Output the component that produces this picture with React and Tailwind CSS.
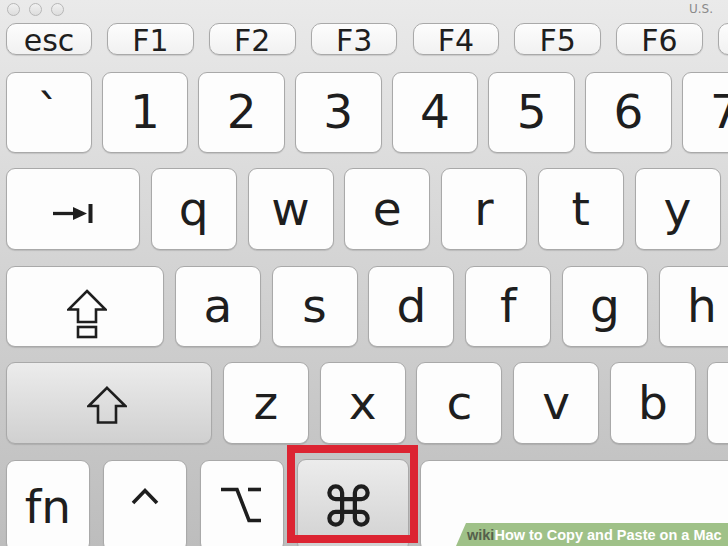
import React from "react";
import { Command } from "lucide-react";

const Key = ({ className = "", gray = false, children }) => (
  <div
    className={`flex shrink-0 justify-center rounded-[9px] border border-[#a9a9a9] text-[#1e1e1e] shadow-[0_1px_1px_rgba(0,0,0,0.12)] ${
      gray ? "bg-linear-to-b from-[#ececec] to-[#d0d0d0]" : "bg-[#fdfdfd]"
    } ${className}`}
  >
    {children}
  </div>
);

const FKey = ({ label, className = "w-[86.6px]" }) => (
  <Key className={`${className} items-center pt-[4px] rounded-[10px] border-[1.5px] border-[#a3a3a3] bg-linear-to-b from-[#fdfdfd] to-[#f1f1f1]`}>
    {label}
  </Key>
);

const Dot = () => (
  <div className="size-[12.5px] rounded-full border border-[#b7b7b7] bg-linear-to-b from-[#f1f1f1] to-[#dddddd]" />
);

const TabIcon = () => (
  <svg width="41" height="19" viewBox="0 0 41 19" className="mt-[8px]">
    <line x1="0" y1="9.5" x2="24" y2="9.5" stroke="#1e1e1e" strokeWidth="3.3" />
    <path d="M20 3 L34 9.5 L20 16 Z" fill="#1e1e1e" />
    <rect x="35.5" y="0" width="4" height="19" fill="#1e1e1e" />
  </svg>
);

const CapsIcon = () => (
  <svg width="40" height="50" viewBox="0 0 40 50" className="mt-[15px] ml-[4px]">
    <path d="M20 2 L38.5 20.5 H29 V33 H11 V20.5 H1.5 Z" fill="none" stroke="#1e1e1e" strokeWidth="2.6" />
    <rect x="11" y="38" width="18" height="10" fill="none" stroke="#1e1e1e" strokeWidth="2.6" />
  </svg>
);

const ShiftIcon = () => (
  <svg width="40" height="38" viewBox="0 0 40 38" className="mt-[4px] mr-[5px]">
    <path d="M20 1.8 L38.3 20 H29 V36.5 H11 V20 H1.7 Z" fill="none" stroke="#1e1e1e" strokeWidth="2.6" />
  </svg>
);

const CtrlIcon = () => (
  <svg width="28" height="18" viewBox="0 0 28 18">
    <polyline points="2,16 14,3.5 26,16" fill="none" stroke="#1e1e1e" strokeWidth="3.6" />
  </svg>
);

const OptIcon = () => (
  <svg width="42" height="38" viewBox="0 0 42 38" className="mr-[3px]">
    <path d="M1 3.5 H17 L29 34.5 H41" fill="none" stroke="#1e1e1e" strokeWidth="3.6" />
    <path d="M28 3.5 H41" fill="none" stroke="#1e1e1e" strokeWidth="3.6" />
  </svg>
);

export default function App() {
  const numbers = ["1", "2", "3", "4", "5", "6", "7", "8"];
  const fkeys = ["F1", "F2", "F3", "F4", "F5", "F6", "F7"];

  return (
    <div className="relative h-[546px] w-[728px] overflow-hidden bg-linear-to-b from-[#eaeaea] via-[#d3d3d3] to-[#bdbdbd] font-['DejaVu_Sans',sans-serif]">
      {/* title bar */}
      <div className="flex h-[23px] items-start justify-between pl-[7px] pr-[15px]">
        <div className="flex gap-[9.5px] pt-[3px]">
          <Dot />
          <Dot />
          <Dot />
        </div>
        <span className="pt-[3px] text-[12px] leading-none text-[#8a8a8a]">U.S.</span>
      </div>

      {/* function row */}
      <div className="flex h-[32px] gap-[15.2px] pl-[6px] text-[30px] leading-none">
        <FKey label="esc" className="w-[86px]" />
        {fkeys.map((f) => (
          <FKey key={f} label={f} />
        ))}
      </div>

      {/* number row */}
      <div className="mt-[17px] flex h-[81px] gap-[10.2px] pl-[6px] text-[47px]">
        <Key className="w-[85.5px] items-center">`</Key>
        {numbers.map((n) => (
          <Key key={n} className="w-[86.5px] items-center">
            {n}
          </Key>
        ))}
      </div>

      {/* qwerty row */}
      <div className="mt-[15px] flex h-[82px] gap-[10.75px] pl-[6px] text-[47px]">
        <Key className="w-[134px] items-center">
          <TabIcon />
        </Key>
        {["q", "w", "e", "r", "t", "y", "u"].map((k) => (
          <Key key={k} className="w-[86px] items-center">
            {k}
          </Key>
        ))}
      </div>

      {/* home row */}
      <div className="mt-[16px] flex h-[81px] gap-[10.8px] pl-[6px] text-[47px]">
        <Key className="w-[158px] items-center">
          <CapsIcon />
        </Key>
        {["a", "s", "d", "f", "g", "h"].map((k) => (
          <Key key={k} className="w-[86px] items-center">
            {k}
          </Key>
        ))}
      </div>

      {/* bottom letter row */}
      <div className="mt-[15px] flex h-[82px] gap-[10.8px] pl-[6px] text-[47px]">
        <Key gray className="w-[206px] items-center">
          <ShiftIcon />
        </Key>
        {["z", "x", "c", "v", "b", "n"].map((k) => (
          <Key key={k} className="w-[86px] items-center">
            {k}
          </Key>
        ))}
      </div>

      {/* modifier row */}
      <div className="mt-[16px] flex h-[92px] gap-[13px] pl-[6px] text-[47px]">
        <Key className="w-[84px] items-start pt-[11px]">fn</Key>
        <Key className="w-[84px] items-start pt-[26px]">
          <CtrlIcon />
        </Key>
        <Key className="w-[84px] items-start pt-[25px]">
          <OptIcon />
        </Key>
        <div className="relative -mt-[1px] w-[112px] shrink-0">
          <Key gray className="h-full w-full items-start pt-[20px] pr-[9px]">
            <Command size={51} strokeWidth={2} color="#1e1e1e" />
          </Key>
          <div className="absolute -left-[10px] -top-[14px] h-[98px] w-[131px] border-[8px] border-[#dc2432]" />
        </div>
        <Key className="-ml-[2px] w-[400px]" />
      </div>

      {/* watermark */}
      <div className="absolute bottom-0 right-0 flex h-[23px] w-[272px] items-center bg-[#9fc188] pl-[11px] pt-[2px] font-['Liberation_Sans',sans-serif] text-[14.5px] font-bold leading-none [clip-path:polygon(10px_0,100%_0,100%_100%,0_100%)]">
        <span className="text-[#55604c]">wiki</span>
        <span className="text-white">How to Copy and Paste on a Mac</span>
      </div>
    </div>
  );
}
